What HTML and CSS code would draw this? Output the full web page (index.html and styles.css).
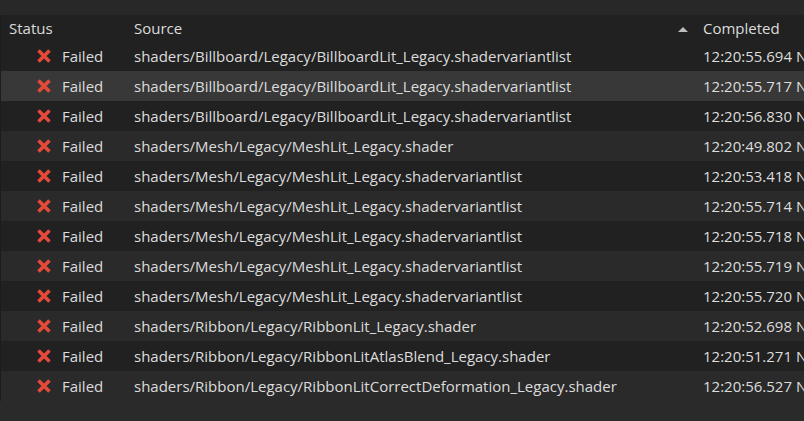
FILE: index.html
```html
<!DOCTYPE html>
<html lang="en">
<head>
    <meta charset="UTF-8">
    <title>Jobs</title>
    <link rel="stylesheet" href="styles.css">
</head>
<body>
    <div class="toolbar"></div>
    <div class="job-table">
        <div class="row head">
            <div class="cell status">Status</div>
            <div class="cell source">Source <span class="sort-arrow"></span></div>
            <div class="cell completed">Completed</div>
        </div>
        <div id="rows"></div>
    </div>

    <script>
        const jobs = [
            ['shaders/Billboard/Legacy/BillboardLit_Legacy.shadervariantlist', '12:20:55.694 NZDT'],
            ['shaders/Billboard/Legacy/BillboardLit_Legacy.shadervariantlist', '12:20:55.717 NZDT'],
            ['shaders/Billboard/Legacy/BillboardLit_Legacy.shadervariantlist', '12:20:56.830 NZDT'],
            ['shaders/Mesh/Legacy/MeshLit_Legacy.shader', '12:20:49.802 NZDT'],
            ['shaders/Mesh/Legacy/MeshLit_Legacy.shadervariantlist', '12:20:53.418 NZDT'],
            ['shaders/Mesh/Legacy/MeshLit_Legacy.shadervariantlist', '12:20:55.714 NZDT'],
            ['shaders/Mesh/Legacy/MeshLit_Legacy.shadervariantlist', '12:20:55.718 NZDT'],
            ['shaders/Mesh/Legacy/MeshLit_Legacy.shadervariantlist', '12:20:55.719 NZDT'],
            ['shaders/Mesh/Legacy/MeshLit_Legacy.shadervariantlist', '12:20:55.720 NZDT'],
            ['shaders/Ribbon/Legacy/RibbonLit_Legacy.shader', '12:20:52.698 NZDT'],
            ['shaders/Ribbon/Legacy/RibbonLitAtlasBlend_Legacy.shader', '12:20:51.271 NZDT'],
            ['shaders/Ribbon/Legacy/RibbonLitCorrectDeformation_Legacy.shader', '12:20:56.527 NZDT']
        ];

        const icon = '<svg class="fail-icon" width="14" height="14" viewBox="0 0 14 14">' +
            '<path d="M1.5 1.5 L12.5 12.5 M12.5 1.5 L1.5 12.5" stroke="#e5493a" stroke-width="3.6"/></svg>';

        const list = document.getElementById('rows');
        jobs.forEach(function (job, i) {
            const row = document.createElement('div');
            row.className = 'row' + (i % 2 ? ' alt' : '') + (i === 1 ? ' selected' : '');
            row.innerHTML =
                '<div class="cell status">' + icon + '<span>Failed</span></div>' +
                '<div class="cell source">' + job[0] + '</div>' +
                '<div class="cell completed">' + job[1] + '</div>';
            list.appendChild(row);
        });
    </script>
</body>
</html>
```

FILE: styles.css
```css
body {
    margin: 0;
    background: #2a2a2a;
    color: #dcdcdc;
    font-family: 'Open Sans', 'Noto Sans', sans-serif;
    font-size: 15px;
    overflow: hidden;
    width: 804px;
    height: 421px;
}

.toolbar {
    height: 15px;
    background: #282828;
}

.job-table {
    border-left: 1px solid #1c1c1c;
}

.row {
    display: flex;
    height: 30px;
    align-items: center;
    background: #212121;
    white-space: nowrap;
}

.row.alt {
    background: #2a2a2a;
}

.row.selected {
    background: #383838;
}

.row.head {
    height: 26px;
    background: #212121;
}

.cell {
    overflow: hidden;
    padding-left: 8px;
    box-sizing: border-box;
}

.status {
    width: 125px;
    display: flex;
    align-items: center;
}

.row:not(.head) .status {
    padding-left: 36px;
}

.fail-icon {
    margin-right: 11px;
    flex-shrink: 0;
}

.source {
    width: 569px;
    position: relative;
}

.completed {
    flex: 1;
}

.sort-arrow {
    position: absolute;
    right: 7px;
    top: 9px;
    width: 0;
    height: 0;
    border-left: 5px solid transparent;
    border-right: 5px solid transparent;
    border-bottom: 5px solid #bdbdbd;
}
```
